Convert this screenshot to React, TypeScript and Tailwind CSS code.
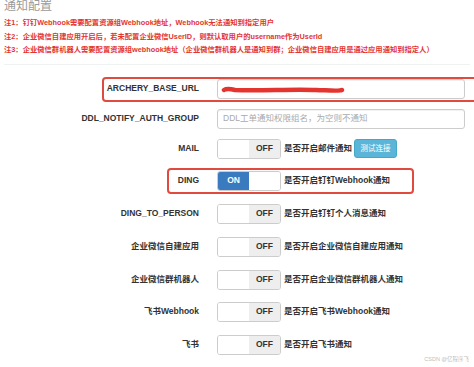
import React from 'react'

const font = { fontFamily: '"Liberation Sans", "Noto Sans CJK SC", sans-serif' }

type Row = {
  label: string
  kind: 'input' | 'toggle'
  on?: boolean
  desc?: string
  placeholder?: string
  scribble?: boolean
  testBtn?: boolean
  mark?: 'wide' | 'narrow'
  mt: string
}

const rows: Row[] = [
  { label: 'ARCHERY_BASE_URL', kind: 'input', scribble: true, mark: 'wide', mt: 'mt-[14px]' },
  { label: 'DDL_NOTIFY_AUTH_GROUP', kind: 'input', placeholder: 'DDL工单通知权限组名，为空则不通知', mt: 'mt-[10px]' },
  { label: 'MAIL', kind: 'toggle', desc: '是否开启邮件通知', testBtn: true, mt: 'mt-[10px]' },
  { label: 'DING', kind: 'toggle', on: true, desc: '是否开启钉钉Webhook通知', mark: 'narrow', mt: 'mt-[12px]' },
  { label: 'DING_TO_PERSON', kind: 'toggle', desc: '是否开启钉钉个人消息通知', mt: 'mt-[13px]' },
  { label: '企业微信自建应用', kind: 'toggle', desc: '是否开启企业微信自建应用通知', mt: 'mt-[13px]' },
  { label: '企业微信群机器人', kind: 'toggle', desc: '是否开启企业微信群机器人通知', mt: 'mt-[13px]' },
  { label: '飞书Webhook', kind: 'toggle', desc: '是否开启飞书Webhook通知', mt: 'mt-[12px]' },
  { label: '飞书', kind: 'toggle', desc: '是否开启飞书通知', mt: 'mt-[13px]' },
]

function Toggle({ on }: { on?: boolean }) {
  return (
    <div className="flex h-[20px] w-[64px] overflow-hidden rounded-[3px] border border-[#ccc] text-[8.5px] font-bold">
      {on ? (
        <>
          <div className="flex w-1/2 items-center justify-center bg-[#3a7bc0] text-white">ON</div>
          <div className="w-1/2 bg-white" />
        </>
      ) : (
        <>
          <div className="w-1/2 bg-white" />
          <div className="flex w-1/2 items-center justify-center bg-[#eeeeee] text-[#333]">OFF</div>
        </>
      )}
    </div>
  )
}

// the hand-drawn red line hiding the url
function Scribble() {
  return (
    <svg className="absolute left-[3px] top-[4px]" width="126" height="12" viewBox="0 0 126 12">
      <path
        d="M3 6 C 6 4, 10 5, 14 6 C 40 7, 70 5, 95 6 S 115 7, 121 6"
        stroke="#e3342f"
        strokeWidth="4.5"
        strokeLinecap="round"
        fill="none"
      />
    </svg>
  )
}

export default function App() {
  return (
    <div className="relative h-[367px] w-[474px] overflow-hidden bg-white text-[#333]" style={font}>
      <div className="px-[4px]">
        <div className="mt-[-1px] text-[12px] leading-[14px] text-[#9a9a9a]">通知配置</div>
        <div className="mt-[3px] text-[7.3px] font-bold leading-[13.5px] text-[#e3342f]">
          <div>注1：钉钉Webhook需要配置资源组Webhook地址，Webhook无法通知到指定用户</div>
          <div>注2：企业微信自建应用开启后，若未配置企业微信UserID，则默认取用户的username作为UserId</div>
          <div>注3：企业微信群机器人需要配置资源组webhook地址（企业微信群机器人是通知到群；企业微信自建应用是通过应用通知到指定人）</div>
        </div>
        <div className="mt-[7px] border-t border-[#eef2f0]" />
      </div>

      <div className="flex flex-col">
        {rows.map((r) => (
          <div key={r.label} className={`relative flex h-[20px] items-center ${r.mt}`}>
            {r.mark === 'wide' && (
              <div className="absolute left-[102px] top-[-2px] h-[25px] w-[380px] rounded-[4px] border-2 border-[#e04a3f]" />
            )}
            {r.mark === 'narrow' && (
              <div className="absolute left-[167px] top-[-3px] h-[26px] w-[247px] rounded-[4px] border-2 border-[#e04a3f]" />
            )}
            <div className="w-[199px] text-right text-[8.5px] font-bold leading-none">{r.label}</div>
            <div className="ml-[18px] flex items-center">
              {r.kind === 'input' ? (
                <div className="relative flex h-[20px] w-[248px] items-center rounded-[3px] border border-[#ccc] bg-white px-[5px] text-[8.5px] text-[#aaa] shadow-[inset_0_1px_1px_rgba(0,0,0,0.06)]">
                  {r.placeholder}
                  {r.scribble && <Scribble />}
                </div>
              ) : (
                <>
                  <Toggle on={r.on} />
                  <span className="ml-[3px] text-[8.5px] font-bold leading-none">{r.desc}</span>
                  {r.testBtn && (
                    <div className="ml-[2px] flex h-[19px] w-[43px] items-center justify-center rounded-[3px] border border-[#46a8c9] bg-[#5bb5d8] text-[7.5px] text-white">
                      测试连接
                    </div>
                  )}
                </>
              )}
            </div>
          </div>
        ))}
      </div>

      <div className="absolute bottom-[5px] right-[5px] text-[5.5px] leading-none text-[#c0c0c0]">CSDN @亿程序飞</div>
    </div>
  )
}
